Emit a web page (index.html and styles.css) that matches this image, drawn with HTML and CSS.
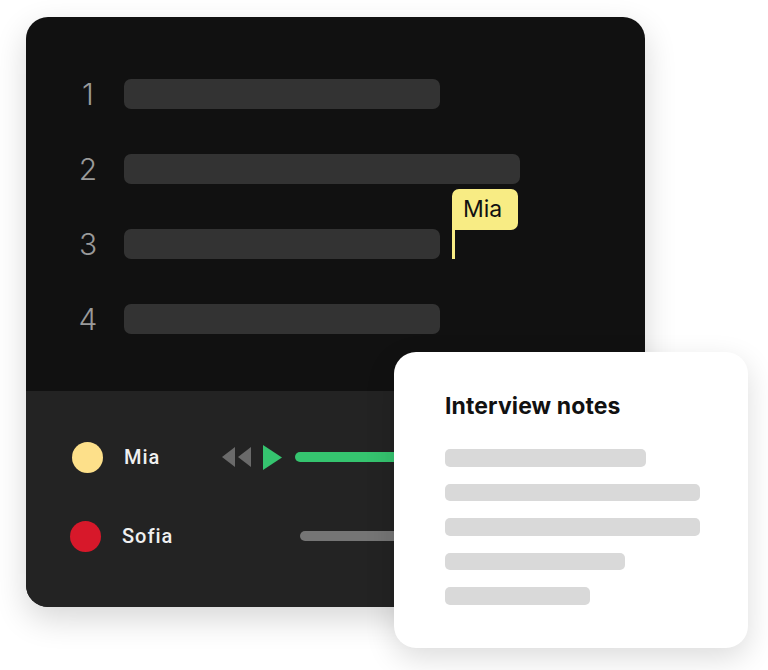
FILE: index.html
```html
<!DOCTYPE html>
<html lang="en">
<head>
<meta charset="utf-8">
<title>Interview</title>
<link rel="stylesheet" href="styles.css">
</head>
<body>
<div class="stage">
  <div class="player">
    <div class="transcript">
      <div class="row"><span class="num">1</span><span class="bar w316"></span></div>
      <div class="row"><span class="num">2</span><span class="bar w396"></span></div>
      <div class="row"><span class="num">3</span><span class="bar w316"></span>
        <div class="flag"><span class="flag-label">Mia</span><span class="flag-pole"></span></div>
      </div>
      <div class="row"><span class="num">4</span><span class="bar w316"></span></div>
    </div>
    <div class="tracks">
      <div class="track">
        <span class="dot dot-mia"></span>
        <span class="name">Mia</span>
        <span class="controls">
          <svg class="rewind" width="30" height="20" viewBox="0 0 30 20"><polygon points="0,10 13,0 13,20" fill="#6a6a6a"/><polygon points="16,10 29,0 29,20" fill="#6a6a6a"/></svg>
          <svg class="play" width="20" height="25" viewBox="0 0 20 25"><polygon points="0,0 19,12.5 0,25" fill="#35c46f"/></svg>
          <span class="progress green"></span>
        </span>
      </div>
      <div class="track">
        <span class="dot dot-sofia"></span>
        <span class="name">Sofia</span>
        <span class="controls">
          <span class="progress gray"></span>
        </span>
      </div>
    </div>
  </div>
  <div class="notes">
    <h2 class="notes-title">Interview notes</h2>
    <div class="lines">
      <span class="line l1"></span>
      <span class="line l2"></span>
      <span class="line l2"></span>
      <span class="line l4"></span>
      <span class="line l5"></span>
    </div>
  </div>
</div>
</body>
</html>
```
FILE: styles.css
```css
* { box-sizing: border-box; }
html, body { margin: 0; padding: 0; background: #ffffff; }
body { font-family: Inter, "Liberation Sans", sans-serif; }

.stage {
  position: relative;
  width: 768px;
  height: 670px;
  padding: 17px 0 0 26px;
  overflow: hidden;
}

.player {
  width: 619px;
  height: 590px;
  border-radius: 22px;
  background: #111111;
  box-shadow: 0 12px 32px rgba(0, 0, 0, 0.16);
  overflow: hidden;
  display: flex;
  flex-direction: column;
}

.transcript {
  height: 374px;
  padding-top: 62px;
  display: flex;
  flex-direction: column;
  gap: 45px;
}
.row {
  position: relative;
  display: flex;
  align-items: center;
  height: 30px;
  padding-left: 44px;
}
.num {
  width: 36px;
  margin-right: 18px;
  text-align: center;
  color: #9a9a9a;
  font-size: 30px;
  font-weight: 300;
  line-height: 30px;
}
.bar {
  height: 30px;
  border-radius: 7px;
  background: #333333;
}
.w316 { width: 316px; }
.w396 { width: 396px; }

.flag {
  position: absolute;
  left: 426px;
  top: -40px;
  display: flex;
  flex-direction: column;
  align-items: flex-start;
}
.flag-label {
  display: block;
  width: 66px;
  height: 41px;
  background: #f8ec84;
  border-radius: 7px 7px 7px 0;
  color: #111;
  font-size: 23px;
  line-height: 41px;
  padding-left: 11px;
}
.flag-pole {
  display: block;
  width: 3px;
  height: 29px;
  background: #f8ec84;
}

.tracks {
  flex: 1;
  background: #232323;
  padding: 46px 0 0 46px;
  display: flex;
  flex-direction: column;
  gap: 39px;
}
.track {
  display: flex;
  align-items: center;
  height: 40px;
}
.dot {
  width: 31px;
  height: 31px;
  border-radius: 50%;
  flex: none;
}
.dot-mia { background: #fde08a; }
.dot-sofia { background: #d7182a; margin-left: -2px; margin-right: 2px; }
.name {
  width: 119px;
  padding-left: 21px;
  color: #f0f0f0;
  font-family: Roboto, "Liberation Sans", sans-serif;
  font-size: 20px;
  font-weight: 500;
  letter-spacing: 1px;
}
.track:last-child .name { padding-left: 19px; }
.controls {
  display: flex;
  align-items: center;
}
.rewind { display: block; margin-right: 11px; }
.play { display: block; margin-right: 12px; }
.progress {
  height: 10px;
  border-radius: 5px;
  width: 260px;
}
.green { background: #35c46f; }
.gray { background: #757575; margin-left: 78px; }

.notes {
  position: absolute;
  left: 394px;
  top: 352px;
  width: 354px;
  height: 296px;
  background: #ffffff;
  border-radius: 22px;
  box-shadow: 0 10px 30px rgba(0, 0, 0, 0.14);
  padding: 39px 0 0 51px;
}
.notes-title {
  margin: 0;
  font-size: 23px;
  font-weight: 700;
  color: #111;
  line-height: 30px;
  letter-spacing: 0.1px;
}
.lines {
  margin-top: 28px;
  display: flex;
  flex-direction: column;
  gap: 17px;
}
.line {
  display: block;
  height: 17.5px;
  border-radius: 5px;
  background: #d9d9d9;
}
.l1 { width: 201px; }
.l2 { width: 255px; }
.l4 { width: 180px; }
.l5 { width: 145px; }
```
